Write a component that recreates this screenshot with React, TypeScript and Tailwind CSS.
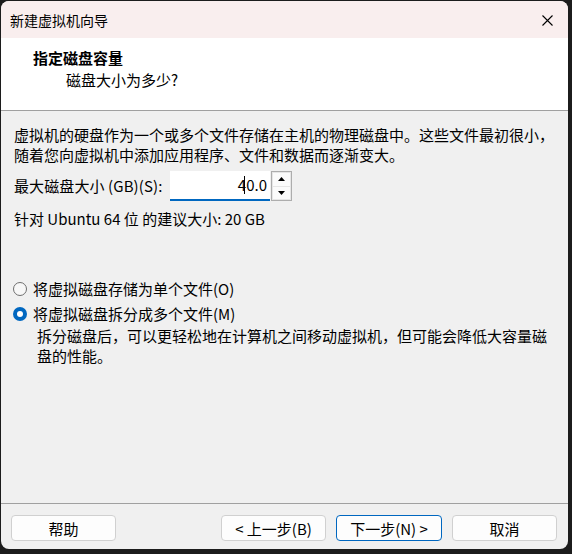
export default function App() {
  return (
    <div className="w-[572px] h-[554px] bg-[#1c1c1c] pl-px pt-px font-['Microsoft_YaHei','Noto_Sans_CJK_SC',sans-serif] text-[15px] text-black">
      <div className="w-[567px] h-[548px] rounded-[8px] overflow-hidden bg-[#f0f0f0] flex flex-col">
        {/* title bar */}
        <div className="h-[37px] bg-[#f9eeee] flex items-center justify-between pl-[9px] pr-[15px] pt-px">
          <span className="text-[14px] leading-[20px]">新建虚拟机向导</span>
          <svg width="11" height="11" viewBox="0 0 11 11">
            <path d="M0.5 0.5 L10.5 10.5 M10.5 0.5 L0.5 10.5" stroke="#000" strokeWidth="1.1" />
          </svg>
        </div>

        {/* header */}
        <div className="h-[73px] bg-white border-b border-[#a0a0a0] pt-[10px] leading-[20px]">
          <div className="pl-[32px] font-bold">指定磁盘容量</div>
          <div className="pl-[65px] mt-[2px]">磁盘大小为多少?</div>
        </div>

        {/* body */}
        <div className="flex-1 pt-[14px] pl-[13px] pr-[10px] leading-[20px]">
          <p>
            虚拟机的硬盘作为一个或多个文件存储在主机的物理磁盘中。这些文件最初很小，随着您向虚拟机中添加应用程序、文件和数据而逐渐变大。
          </p>

          <div className="mt-[6px] flex items-center">
            <span className="w-[156px] tracking-[0.1px]">最大磁盘大小 (GB)(S):</span>
            <div className="w-[100px] h-[30px] bg-white border-b-2 border-[#0067c0] flex items-center justify-end pr-[3px]">
              <span className="relative">
                4
                <span className="absolute right-[1px] top-[1px] w-px h-[18px] bg-black" />
              </span>
              <span>0.0</span>
            </div>
            <div className="ml-px w-[21px] h-[30px] border border-[#adadad] bg-[#e6e6e6] flex flex-col gap-px p-px">
              <div className="flex-1 bg-[#fbfbfb] flex items-center justify-center">
                <svg width="7" height="4" viewBox="0 0 7 4">
                  <path d="M3.5 0 L7 4 L0 4 Z" fill="#000" />
                </svg>
              </div>
              <div className="flex-1 bg-[#fbfbfb] flex items-center justify-center">
                <svg width="7" height="4" viewBox="0 0 7 4">
                  <path d="M0 0 L7 0 L3.5 4 Z" fill="#000" />
                </svg>
              </div>
            </div>
          </div>

          <p className="mt-[8px]">针对 Ubuntu 64 位 的建议大小: 20 GB</p>

          <div className="mt-[50px] -ml-px flex items-center gap-[6px]">
            <span className="w-[14px] h-[14px] rounded-full border border-[#6e6e6e] bg-[#f7f7f7]" />
            <span>将虚拟磁盘存储为单个文件(O)</span>
          </div>
          <div className="mt-[5px] -ml-px flex items-center gap-[6px]">
            <span className="w-[14px] h-[14px] rounded-full bg-[#0067c0] flex items-center justify-center">
              <span className="w-[6px] h-[6px] rounded-full bg-white" />
            </span>
            <span>将虚拟磁盘拆分成多个文件(M)</span>
          </div>
          <p className="mt-[2px] pl-[23px]">
            拆分磁盘后，可以更轻松地在计算机之间移动虚拟机，但可能会降低大容量磁盘的性能。
          </p>
        </div>

        {/* footer */}
        <div className="h-[46px] border-t border-[#a0a0a0] pt-[11px] pl-[10px] pr-[11px] flex items-start justify-between">
          <button className="w-[105px] h-[26px] rounded-[4px] border border-[#d0d0d0] bg-[#fdfdfd] flex items-center justify-center leading-none">
            帮助
          </button>
          <div className="flex gap-[10px]">
            <button className="w-[105px] h-[26px] rounded-[4px] border border-[#d0d0d0] bg-[#fdfdfd] flex items-center justify-center leading-none">
              &lt; 上一步(B)
            </button>
            <button className="w-[106px] h-[26px] rounded-[4px] border border-[#0067c0] bg-[#fdfdfd] flex items-center justify-center leading-none">
              下一步(N) &gt;
            </button>
            <button className="w-[105px] h-[26px] rounded-[4px] border border-[#d0d0d0] bg-[#fdfdfd] flex items-center justify-center leading-none">
              取消
            </button>
          </div>
        </div>
      </div>
    </div>
  );
}
